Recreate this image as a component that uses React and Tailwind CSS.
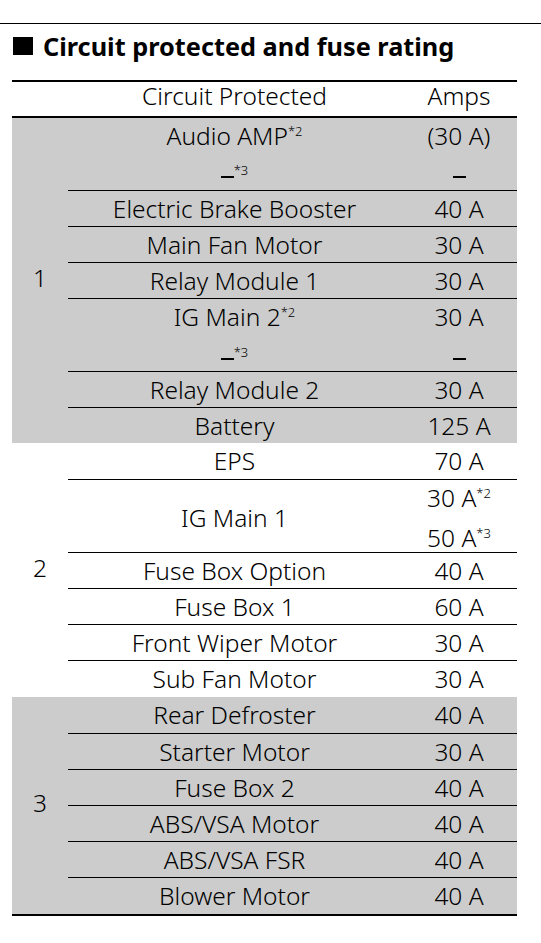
import React from "react";

const Sup = ({ children }) => (
  <span className="relative top-[-9px] text-[13px] leading-none">{children}</span>
);

const Dash = () => (
  <span className="inline-block w-[13px] h-[2px] bg-black align-baseline mb-[6px]" />
);

const groups = [
  {
    label: "1",
    gray: true,
    rows: [
      {
        c: [
          ["Audio AMP", "*2"],
          ["–", "*3"],
        ],
        a: [["(30 A)"], ["–"]],
        h: 2,
      },
      { c: [["Electric Brake Booster"]], a: [["40 A"]], h: 1 },
      { c: [["Main Fan Motor"]], a: [["30 A"]], h: 1 },
      { c: [["Relay Module 1"]], a: [["30 A"]], h: 1 },
      {
        c: [
          ["IG Main 2", "*2"],
          ["–", "*3"],
        ],
        a: [["30 A"], ["–"]],
        h: 2,
      },
      { c: [["Relay Module 2"]], a: [["30 A"]], h: 1 },
      { c: [["Battery"]], a: [["125 A"]], h: 1 },
    ],
  },
  {
    label: "2",
    gray: false,
    rows: [
      { c: [["EPS"]], a: [["70 A"]], h: 1 },
      {
        c: [["IG Main 1"]],
        a: [
          ["30 A", "*2"],
          ["50 A", "*3"],
        ],
        h: 2,
      },
      { c: [["Fuse Box Option"]], a: [["40 A"]], h: 1 },
      { c: [["Fuse Box 1"]], a: [["60 A"]], h: 1 },
      { c: [["Front Wiper Motor"]], a: [["30 A"]], h: 1 },
      { c: [["Sub Fan Motor"]], a: [["30 A"]], h: 1 },
    ],
  },
  {
    label: "3",
    gray: true,
    rows: [
      { c: [["Rear Defroster"]], a: [["40 A"]], h: 1 },
      { c: [["Starter Motor"]], a: [["30 A"]], h: 1 },
      { c: [["Fuse Box 2"]], a: [["40 A"]], h: 1 },
      { c: [["ABS/VSA Motor"]], a: [["40 A"]], h: 1 },
      { c: [["ABS/VSA FSR"]], a: [["40 A"]], h: 1 },
      { c: [["Blower Motor"]], a: [["40 A"]], h: 1 },
    ],
  },
];

function Cell({ lines }) {
  return (
    <div className="flex flex-col">
      {lines.map((l, i) => (
        <div key={i} className="flex-1 flex items-center justify-center whitespace-nowrap pb-[3px]">
          <span>
            {l[0] === "–" ? <Dash /> : l[0]}
            {l[1] ? <Sup>{l[1]}</Sup> : null}
          </span>
        </div>
      ))}
    </div>
  );
}

export default function App() {
  return (
    <div
      className="w-[541px] h-[943px] bg-white text-black overflow-hidden"
      style={{ fontFamily: '"Noto Sans", "Open Sans", sans-serif' }}
    >
      <div className="h-[24px] border-b border-black" />
      <div className="h-[55.5px] flex items-start gap-[10px] pl-[13px] pt-[12.5px]">
        <div className="w-[20px] h-[18px] bg-black" />
        <div className="text-[25.3px] font-bold leading-[18px] whitespace-nowrap">
          Circuit protected and fuse rating
        </div>
      </div>
      <div className="ml-[12px] w-[505px] border-t-2 border-b-2 border-black text-[24.5px] font-light">
        <div className="h-[36px] border-b-2 border-black grid grid-cols-[56px_333px_116px] leading-[28px]">
          <div />
          <div className="text-center">Circuit Protected</div>
          <div className="text-center">Amps</div>
        </div>
        {groups.map((g) => (
          <div key={g.label} className={"flex " + (g.gray ? "bg-[#cccccc]" : "bg-white")}>
            <div className="w-[56px] flex items-center justify-center pb-[3px]">{g.label}</div>
            <div className="flex-1 flex flex-col">
              {g.rows.map((r, i) => (
                <div
                  key={i}
                  className={
                    "grid grid-cols-[333px_116px] " +
                    (i > 0 ? "border-t border-black " : "") +
                    (r.h === 2 ? "h-[72.4px]" : "h-[36.2px]")
                  }
                >
                  <Cell lines={r.c} />
                  <Cell lines={r.a} />
                </div>
              ))}
            </div>
          </div>
        ))}
      </div>
    </div>
  );
}
